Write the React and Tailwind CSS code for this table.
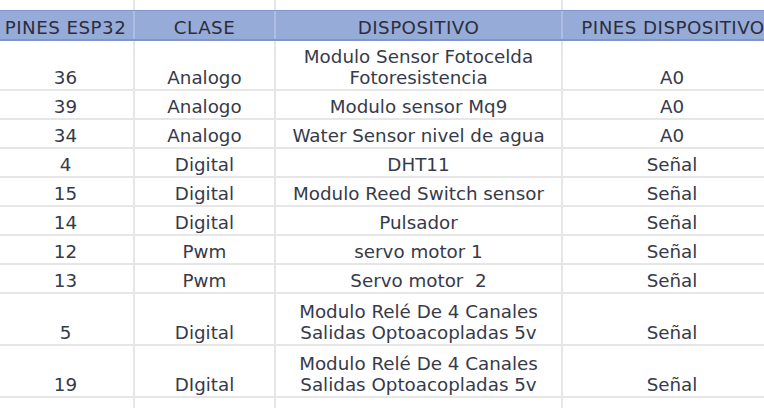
import React from 'react';

const rows = [
    { pin: '36', clase: 'Analogo', disp: ['Modulo Sensor Fotocelda', 'Fotoresistencia'], out: 'A0', h: 'h-[50px]' },
    { pin: '39', clase: 'Analogo', disp: ['Modulo sensor Mq9'], out: 'A0', h: 'h-[29px]' },
    { pin: '34', clase: 'Analogo', disp: ['Water Sensor nivel de agua'], out: 'A0', h: 'h-[29px]' },
    { pin: '4', clase: 'Digital', disp: ['DHT11'], out: 'Señal', h: 'h-[29px]' },
    { pin: '15', clase: 'Digital', disp: ['Modulo Reed Switch sensor'], out: 'Señal', h: 'h-[29px]' },
    { pin: '14', clase: 'Digital', disp: ['Pulsador'], out: 'Señal', h: 'h-[29px]' },
    { pin: '12', clase: 'Pwm', disp: ['servo motor 1'], out: 'Señal', h: 'h-[29px]' },
    { pin: '13', clase: 'Pwm', disp: ['Servo motor  2'], out: 'Señal', h: 'h-[29px]' },
    { pin: '5', clase: 'Digital', disp: ['Modulo Relé De 4 Canales', 'Salidas Optoacopladas 5v'], out: 'Señal', h: 'h-[52px]' },
    { pin: '19', clase: 'DIgital', disp: ['Modulo Relé De 4 Canales', 'Salidas Optoacopladas 5v'], out: 'Señal', h: 'h-[52px]' },
];

// column widths incl. the 2px right gridline
const cols = 'grid grid-cols-[137px_141px_287px_220px]';

const Cell = ({ children }) => (
    <div className="flex flex-col items-center justify-end border-r-2 border-b-2 border-[#e6e6e6] pb-[1px] text-center whitespace-pre">
        {children}
    </div>
);

const Spacer = ({ h }) => (
    <div className={`${cols} ${h}`}>
        <div className="border-r-2 border-[#e6e6e6]" />
        <div className="border-r-2 border-[#e6e6e6]" />
        <div className="border-r-2 border-[#e6e6e6]" />
        <div />
    </div>
);

const App = () => {
    return (
        <div
            className="w-[764px] h-[417px] overflow-hidden bg-white text-[18.3px] leading-[21px] text-[#363a4a]"
            style={{ fontFamily: '"DejaVu Sans", Verdana, sans-serif' }}
        >
            <div className="-ml-[2px] w-[785px]">
                <Spacer h="h-[10px]" />

                {/* header band */}
                <div className={`${cols} h-[31px] bg-[#97abd9] border-t border-b-2 border-[#8096c8] text-[#2c2e3c] tracking-[0.45px]`}>
                    {['PINES ESP32', 'CLASE', 'DISPOSITIVO', 'PINES DISPOSITIVO'].map((t, i) => (
                        <div
                            key={t}
                            className={`flex items-end justify-center pb-[1px] whitespace-nowrap ${i < 3 ? 'border-r-2 border-[#aebde2]' : ''}`}
                        >
                            {t}
                        </div>
                    ))}
                </div>

                {rows.map((r) => (
                    <div key={r.pin} className={`${cols} ${r.h}`}>
                        <Cell>{r.pin}</Cell>
                        <Cell>{r.clase}</Cell>
                        <Cell>
                            {r.disp.map((l) => (
                                <span key={l}>{l}</span>
                            ))}
                        </Cell>
                        <Cell>{r.out}</Cell>
                    </div>
                ))}

                <Spacer h="h-[10px]" />
            </div>
        </div>
    );
};

export default App;
